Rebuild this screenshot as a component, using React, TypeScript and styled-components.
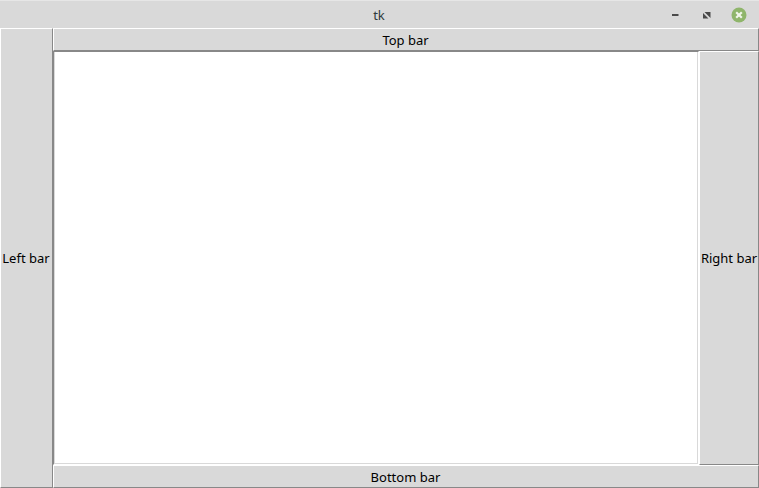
import React from "react";
import styled, { createGlobalStyle } from "styled-components";

const GlobalStyle = createGlobalStyle`
    html, body {
        margin: 0;
        padding: 0;
        background: #d9d9d9;
    }
`;

const Window = styled.div`
    width: 759px;
    height: 488px;
    display: flex;
    flex-direction: column;
    overflow: hidden;
    font-family: "Noto Sans", sans-serif;
    font-size: 13px;
    color: #000;
`;

const TitleBar = styled.div`
    height: 28px;
    flex: none;
    box-sizing: border-box;
    border-top: 1px solid #e6e6e6;
    background: #d9d9d9;
    display: flex;
    align-items: center;
    padding-right: 11px;
    color: #2f3b3e;
`;

const Title = styled.div`
    flex: 1;
    text-align: center;
    padding-left: 92px;
`;

const WindowButtons = styled.div`
    display: flex;
    align-items: center;
    gap: 14px;
`;

const WindowButton = styled.svg`
    width: 18px;
    height: 18px;
    display: block;
`;

const Body = styled.div`
    flex: 1;
    min-height: 0;
    display: flex;
`;

const Bar = styled.div`
    box-sizing: border-box;
    display: flex;
    align-items: center;
    justify-content: center;
    background: #d9d9d9;
    border-style: solid;
    border-width: 1px;
    border-color: #fff #888 #888 #fff;
    white-space: nowrap;
`;

const LeftBar = styled(Bar)`
    width: 53px;
    flex: none;
    padding-right: 1px;
`;

const CenterColumn = styled.div`
    flex: 1;
    min-width: 0;
    display: flex;
    flex-direction: column;
`;

const HorizontalBar = styled(Bar)`
    height: 23px;
    flex: none;
    padding-right: 1px;
`;

const MiddleRow = styled.div`
    flex: 1;
    min-height: 0;
    display: flex;
`;

const Canvas = styled.div`
    flex: 1;
    box-sizing: border-box;
    background: #fff;
    border-style: solid;
    border-width: 1px;
    border-color: #888 #fff #fff #888;
    box-shadow: inset 1px 0 0 #d9d9d9, inset -1px -1px 0 #d9d9d9;
`;

const RightBar = styled(Bar)`
    width: 60px;
    flex: none;
`;

const App = () => {
    return (
        <Window>
            <GlobalStyle />
            <TitleBar>
                <Title>tk</Title>
                <WindowButtons>
                    <WindowButton viewBox="0 0 18 18">
                        <rect x="6" y="8" width="6.5" height="2" fill="#4a4a4a" />
                    </WindowButton>
                    <WindowButton viewBox="0 0 18 18">
                        <path d="M6.5 6h6v6zM5 7l5.5 5.5H5z" fill="#4a4a4a" />
                    </WindowButton>
                    <WindowButton viewBox="0 0 18 18">
                        <circle cx="9" cy="9" r="7.5" fill="#8fb56b" />
                        <path d="M6.2 6.2l5.6 5.6M11.8 6.2l-5.6 5.6" stroke="#f1f5ea" strokeWidth="2.2" />
                    </WindowButton>
                </WindowButtons>
            </TitleBar>
            <Body>
                <LeftBar>Left bar</LeftBar>
                <CenterColumn>
                    <HorizontalBar>Top bar</HorizontalBar>
                    <MiddleRow>
                        <Canvas />
                        <RightBar>Right bar</RightBar>
                    </MiddleRow>
                    <HorizontalBar>Bottom bar</HorizontalBar>
                </CenterColumn>
            </Body>
        </Window>
    );
};

export default App;
